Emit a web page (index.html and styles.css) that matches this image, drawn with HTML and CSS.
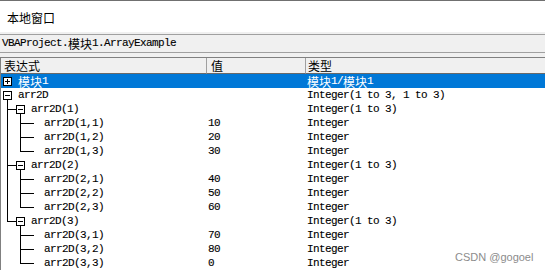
FILE: index.html
```html
<!DOCTYPE html>
<html>
<head>
<meta charset="utf-8">
<link rel="stylesheet" href="styles.css">
</head>
<body>
<div class="title">本地窗口</div>
<div class="sep1"></div>
<div class="ctx">VBAProject.<span class="cjk">模块</span>1.ArrayExample</div>
<div class="sep2"></div>
<div class="grid">
  <div class="hdr">
    <div class="h1"><span class="cjk">表达式</span></div>
    <div class="h2"><span class="cjk">值</span></div>
    <div class="h3"><span class="cjk">类型</span></div>
  </div>

  <div class="row sel">
    <div class="c1"><svg class="gd" width="13" height="14" viewBox="0 0 13 14"><rect x="2.5" y="3.5" width="8" height="8" fill="#fff" stroke="#000"/><path d="M4 7.5H9M6.5 5V10" stroke="#000"/></svg><span class="cjk">模块</span>1</div>
    <div class="c2"></div>
    <div class="c3"><span class="cjk">模块</span>1/<span class="cjk">模块</span>1</div>
  </div>

  <div class="row">
    <div class="c1"><svg class="gd" width="13" height="14" viewBox="0 0 13 14"><path d="M6.5 11V14" stroke="#000"/><rect x="2.5" y="3.5" width="8" height="8" fill="#fff" stroke="#000"/><path d="M4 7.5H9" stroke="#000"/></svg>arr2D</div>
    <div class="c2"></div>
    <div class="c3">Integer(1 to 3, 1 to 3)</div>
  </div>

  <div class="row">
    <div class="c1"><svg class="gd" width="26" height="14" viewBox="0 0 26 14"><path d="M6.5 0V14M6.5 7.5H16M19.5 11V14" stroke="#000"/><rect x="15.5" y="3.5" width="8" height="8" fill="#fff" stroke="#000"/><path d="M17 7.5H22" stroke="#000"/></svg>arr2D(1)</div>
    <div class="c2"></div>
    <div class="c3">Integer(1 to 3)</div>
  </div>
  <div class="row">
    <div class="c1"><svg class="gd" width="39" height="14" viewBox="0 0 39 14"><path d="M6.5 0V14M19.5 0V14M19.5 7.5H33" stroke="#000"/></svg>arr2D(1,1)</div>
    <div class="c2">10</div>
    <div class="c3">Integer</div>
  </div>
  <div class="row">
    <div class="c1"><svg class="gd" width="39" height="14" viewBox="0 0 39 14"><path d="M6.5 0V14M19.5 0V14M19.5 7.5H33" stroke="#000"/></svg>arr2D(1,2)</div>
    <div class="c2">20</div>
    <div class="c3">Integer</div>
  </div>
  <div class="row">
    <div class="c1"><svg class="gd" width="39" height="14" viewBox="0 0 39 14"><path d="M6.5 0V14M19.5 0V8M19.5 7.5H33" stroke="#000"/></svg>arr2D(1,3)</div>
    <div class="c2">30</div>
    <div class="c3">Integer</div>
  </div>

  <div class="row">
    <div class="c1"><svg class="gd" width="26" height="14" viewBox="0 0 26 14"><path d="M6.5 0V14M6.5 7.5H16M19.5 11V14" stroke="#000"/><rect x="15.5" y="3.5" width="8" height="8" fill="#fff" stroke="#000"/><path d="M17 7.5H22" stroke="#000"/></svg>arr2D(2)</div>
    <div class="c2"></div>
    <div class="c3">Integer(1 to 3)</div>
  </div>
  <div class="row">
    <div class="c1"><svg class="gd" width="39" height="14" viewBox="0 0 39 14"><path d="M6.5 0V14M19.5 0V14M19.5 7.5H33" stroke="#000"/></svg>arr2D(2,1)</div>
    <div class="c2">40</div>
    <div class="c3">Integer</div>
  </div>
  <div class="row">
    <div class="c1"><svg class="gd" width="39" height="14" viewBox="0 0 39 14"><path d="M6.5 0V14M19.5 0V14M19.5 7.5H33" stroke="#000"/></svg>arr2D(2,2)</div>
    <div class="c2">50</div>
    <div class="c3">Integer</div>
  </div>
  <div class="row">
    <div class="c1"><svg class="gd" width="39" height="14" viewBox="0 0 39 14"><path d="M6.5 0V14M19.5 0V8M19.5 7.5H33" stroke="#000"/></svg>arr2D(2,3)</div>
    <div class="c2">60</div>
    <div class="c3">Integer</div>
  </div>

  <div class="row">
    <div class="c1"><svg class="gd" width="26" height="14" viewBox="0 0 26 14"><path d="M6.5 0V8M6.5 7.5H16M19.5 11V14" stroke="#000"/><rect x="15.5" y="3.5" width="8" height="8" fill="#fff" stroke="#000"/><path d="M17 7.5H22" stroke="#000"/></svg>arr2D(3)</div>
    <div class="c2"></div>
    <div class="c3">Integer(1 to 3)</div>
  </div>
  <div class="row">
    <div class="c1"><svg class="gd" width="39" height="14" viewBox="0 0 39 14"><path d="M19.5 0V14M19.5 7.5H33" stroke="#000"/></svg>arr2D(3,1)</div>
    <div class="c2">70</div>
    <div class="c3">Integer</div>
  </div>
  <div class="row">
    <div class="c1"><svg class="gd" width="39" height="14" viewBox="0 0 39 14"><path d="M19.5 0V14M19.5 7.5H33" stroke="#000"/></svg>arr2D(3,2)</div>
    <div class="c2">80</div>
    <div class="c3">Integer</div>
  </div>
  <div class="row">
    <div class="c1"><svg class="gd" width="39" height="14" viewBox="0 0 39 14"><path d="M19.5 0V8M19.5 7.5H33" stroke="#000"/></svg>arr2D(3,3)</div>
    <div class="c2">0</div>
    <div class="c3">Integer</div>
  </div>
</div>
<div class="mark">CSDN @gogoel</div>
</body>
</html>
```

FILE: styles.css
```css
html, body {
  margin: 0;
  padding: 0;
}
body {
  width: 545px;
  height: 275px;
  overflow: hidden;
  background: #fff;
  font-family: "Liberation Mono", monospace;
  font-size: 11px;
  letter-spacing: -0.6px;
  color: #000;
  position: relative;
  display: flex;
  flex-direction: column;
}
body > div {
  flex: none;
}
.ctx, .row {
  -webkit-text-stroke: 0.12px currentColor;
}
.cjk {
  font-family: "Noto Sans CJK SC", sans-serif;
  font-size: 12px;
  letter-spacing: 0;
  -webkit-text-stroke: 0;
}
.title {
  height: 30px;
  border-top: 1px solid #707070;
  background: #fff;
  display: flex;
  align-items: center;
  padding-left: 7px;
  padding-top: 1px;
  font-family: "Noto Sans CJK SC", sans-serif;
  font-size: 12px;
  letter-spacing: 0;
}
.sep1 {
  height: 2px;
  background: #f0f0f0;
  border-bottom: 1px solid #a0a0a0;
}
.ctx {
  height: 17px;
  line-height: 17px;
  background: #f0f0f0;
  padding-left: 2px;
  border-bottom: 1px solid #a0a0a0;
  display: flex;
  align-items: center;
  white-space: pre;
}
.sep2 {
  height: 4px;
  background: #f0f0f0;
  border-bottom: 1px solid #808080;
}
.grid {
  display: grid;
  grid-template-columns: 206px 99px 1fr;
  grid-template-rows: 16px;
  grid-auto-rows: 14px;
  border-left: 1px solid #808080;
  align-content: start;
}
.hdr, .row {
  display: contents;
}
.hdr > div {
  height: 15px;
  background: #f0f0f0;
  border-bottom: 1px solid #696969;
  display: flex;
  align-items: center;
  overflow: hidden;
}
.h1 { padding-left: 3px; border-right: 1px solid #a0a0a0; }
.h2 { padding-left: 4px; border-right: 1px solid #a0a0a0; }
.h3 { padding-left: 2px; }
.row > div {
  height: 14px;
  display: flex;
  align-items: center;
  white-space: pre;
  overflow: hidden;
}
.row.sel > div {
  background: #0078d7;
  color: #fff;
}
.c1 { padding-left: 0; }
.c2 { padding-left: 1px; }
.c3 { padding-left: 1px; }
.gd {
  display: block;
  flex: none;
  margin-right: 4px;
  shape-rendering: crispEdges;
}
.mark {
  position: absolute;
  left: 455px;
  top: 251px;
  font-family: "Liberation Sans", Arial, sans-serif;
  font-size: 11px;
  letter-spacing: 0;
  color: #8c8c8c;
}
```
